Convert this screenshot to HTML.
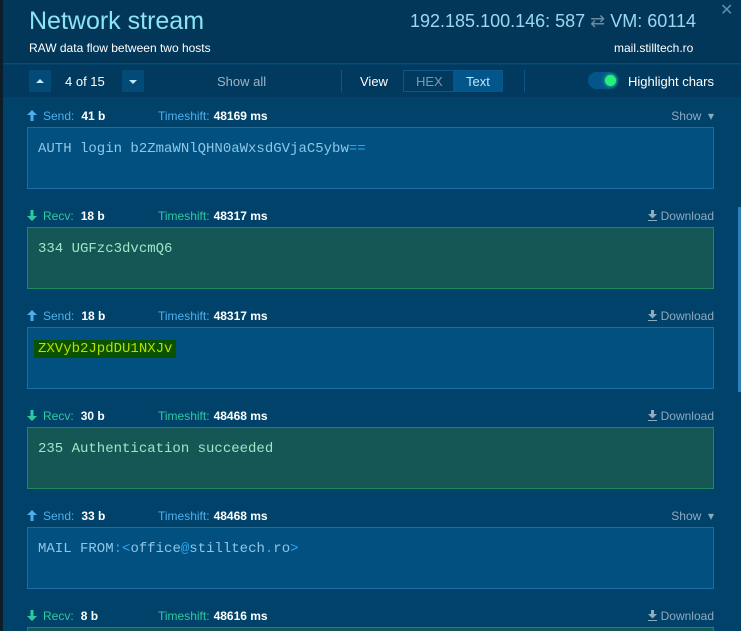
<!DOCTYPE html>
<html style="overflow:hidden;width:741px;height:631px"><head><meta charset="utf-8"><style>
*{margin:0;padding:0;box-sizing:border-box}
body{width:741px;height:631px;overflow:hidden;background:#0b1e2a;font-family:"Liberation Sans",sans-serif;position:relative}
.panel{position:absolute;left:3px;top:0;width:738px;height:631px;background:#01426b;overflow:hidden}
.hdr{position:absolute;left:0;top:0;width:738px;height:64px;background:#02375a;border-bottom:1px solid #0a4a73}
.abs{position:absolute;white-space:nowrap}
.tb{position:absolute;left:0;top:65px;width:738px;height:32px;background:#023a5f}
.btn{position:absolute;top:5px;width:22px;height:22px;background:#034a77}
.mono{font-family:"Liberation Mono",monospace;font-size:14px}
.box{position:absolute;left:24px;width:687px;height:62px;border:1px solid #1c6ca8;background:#01507f}
.box.r{background:#155754;border-color:#1c8a5f}
.lab{position:absolute;font-size:12px;line-height:14px}
.lab svg{vertical-align:-1px;margin-right:6px}
.lab .k{color:#4db0ea}
.lab.r .k{color:#2ec9a0}
.lab b{color:#fff;font-weight:bold;margin-left:7px}
.ts{position:absolute;left:155px;font-size:12px;line-height:14px;color:#4db0ea}
.ts.r{color:#2ec9a0}
.ts b{color:#fff;margin-left:4px}
.act{position:absolute;right:27px;font-size:12px;line-height:14px;color:#8fa9bd}
.act svg{vertical-align:-1px;margin-right:4px}
</style></head><body>
<div class="panel">
<div class="hdr">
<div class="abs" style="left:26px;top:7px;font-size:25px;color:#8ee3f2">Network stream</div>
<div class="abs" style="left:26px;top:41px;font-size:12px;color:#fff">RAW data flow between two hosts</div>
<div class="abs" style="left:407px;top:11px;font-size:18px;color:#9ad8f0">192.185.100.146: 587 <span style="color:#6c8aa0">⇄</span> VM: 60114</div>
<div class="abs" style="left:611px;top:41px;font-size:12px;color:#fff">mail.stilltech.ro</div>
<div class="abs" style="left:717px;top:0px;font-size:16px;color:#5d8eb0">✕</div>
</div>
<div class="tb">
<div class="btn" style="left:26px"><svg width="22" height="22"><path d="M7 13L11 9L15 13Z" fill="#bfe7ff"/></svg></div>
<div class="abs" style="left:62px;top:9px;font-size:13px;color:#fff">4 of 15</div>
<div class="btn" style="left:119px"><svg width="22" height="22"><path d="M7 10L11 14L15 10Z" fill="#bfe7ff"/></svg></div>
<div class="abs" style="left:214px;top:9px;font-size:13px;color:#9ab4c6">Show all</div>
<div class="abs" style="left:338px;top:5px;width:1px;height:22px;background:#0e5585"></div>
<div class="abs" style="left:357px;top:9px;font-size:13px;color:#fff">View</div>
<div class="abs" style="left:400px;top:5px;width:100px;height:22px;border:1px solid #0c5689;background:#023a5f"></div>
<div class="abs" style="left:450px;top:6px;width:49px;height:20px;background:#03568a"></div>
<div class="abs" style="left:413px;top:9px;font-size:13px;color:#7e98ab">HEX</div>
<div class="abs" style="left:463px;top:9px;font-size:13px;color:#bfe7ff">Text</div>
<div class="abs" style="left:521px;top:5px;width:1px;height:22px;background:#0e5585"></div>
<div class="abs" style="left:585px;top:7px;width:30px;height:17px;border-radius:9px;background:#03568a"></div>
<div class="abs" style="left:602px;top:10px;width:11px;height:11px;border-radius:50%;background:#27f07a;box-shadow:0 0 4px #27f07a"></div>
<div class="abs" style="left:625px;top:9px;font-size:13px;color:#fff">Highlight chars</div>
</div>

<div class="lab" style="left:24px;top:109px"><span class="k"><svg width="10" height="11"><path d="M5 0L10 5H6.5V11H3.5V5H0Z" fill="#4db0ea"/></svg>Send:</span><b>41 b</b></div>
<div class="ts" style="top:109px">Timeshift:<b>48169 ms</b></div>
<div class="act" style="top:109px">Show &nbsp;▾</div>
<div class="box" style="top:127px"><div class="abs mono" style="left:10px;top:13px;color:#8ec7ea">AUTH login b2ZmaWNlQHN0aWxsdGVjaC5ybw<span style="color:#2aa6f0">==</span></div></div>

<div class="lab r" style="left:24px;top:209px"><span class="k"><svg width="10" height="11"><path d="M5 11L10 6H6.5V0H3.5V6H0Z" fill="#2ec9a0"/></svg>Recv:</span><b>18 b</b></div>
<div class="ts r" style="top:209px">Timeshift:<b>48317 ms</b></div>
<div class="act" style="top:209px"><svg width="9" height="11"><path d="M3 0H6V4H9L4.5 8.5L0 4H3Z M0 10H9V11H0Z" fill="#8fa9bd"/></svg>Download</div>
<div class="box r" style="top:227px"><div class="abs mono" style="left:10px;top:13px;color:#9ee6c8">334 UGFzc3dvcmQ6</div></div>

<div class="lab" style="left:24px;top:309px"><span class="k"><svg width="10" height="11"><path d="M5 0L10 5H6.5V11H3.5V5H0Z" fill="#4db0ea"/></svg>Send:</span><b>18 b</b></div>
<div class="ts" style="top:309px">Timeshift:<b>48317 ms</b></div>
<div class="act" style="top:309px"><svg width="9" height="11"><path d="M3 0H6V4H9L4.5 8.5L0 4H3Z M0 10H9V11H0Z" fill="#8fa9bd"/></svg>Download</div>
<div class="box" style="top:327px"><div class="abs mono" style="left:6px;top:12px;color:#b6e000;background:#0b5200;padding:1px 4px">ZXVyb2JpdDU1NXJv</div></div>

<div class="lab r" style="left:24px;top:409px"><span class="k"><svg width="10" height="11"><path d="M5 11L10 6H6.5V0H3.5V6H0Z" fill="#2ec9a0"/></svg>Recv:</span><b>30 b</b></div>
<div class="ts r" style="top:409px">Timeshift:<b>48468 ms</b></div>
<div class="act" style="top:409px"><svg width="9" height="11"><path d="M3 0H6V4H9L4.5 8.5L0 4H3Z M0 10H9V11H0Z" fill="#8fa9bd"/></svg>Download</div>
<div class="box r" style="top:427px"><div class="abs mono" style="left:10px;top:13px;color:#9ee6c8">235 Authentication succeeded</div></div>

<div class="lab" style="left:24px;top:509px"><span class="k"><svg width="10" height="11"><path d="M5 0L10 5H6.5V11H3.5V5H0Z" fill="#4db0ea"/></svg>Send:</span><b>33 b</b></div>
<div class="ts" style="top:509px">Timeshift:<b>48468 ms</b></div>
<div class="act" style="top:509px">Show &nbsp;▾</div>
<div class="box" style="top:527px"><div class="abs mono" style="left:10px;top:13px;color:#8ec7ea">MAIL FROM<span style="color:#2aa6f0">:&lt;</span>office<span style="color:#2aa6f0">@</span>stilltech<span style="color:#2aa6f0">.</span>ro<span style="color:#2aa6f0">&gt;</span></div></div>

<div class="lab r" style="left:24px;top:609px"><span class="k"><svg width="10" height="11"><path d="M5 11L10 6H6.5V0H3.5V6H0Z" fill="#2ec9a0"/></svg>Recv:</span><b>8 b</b></div>
<div class="ts r" style="top:609px">Timeshift:<b>48616 ms</b></div>
<div class="act" style="top:609px"><svg width="9" height="11"><path d="M3 0H6V4H9L4.5 8.5L0 4H3Z M0 10H9V11H0Z" fill="#8fa9bd"/></svg>Download</div>
<div class="box r" style="top:627px;height:4px;border-bottom:none"></div>

<div class="abs" style="left:735px;top:207px;width:3px;height:185px;background:#2a7fb8"></div>
</div>
</body></html>
